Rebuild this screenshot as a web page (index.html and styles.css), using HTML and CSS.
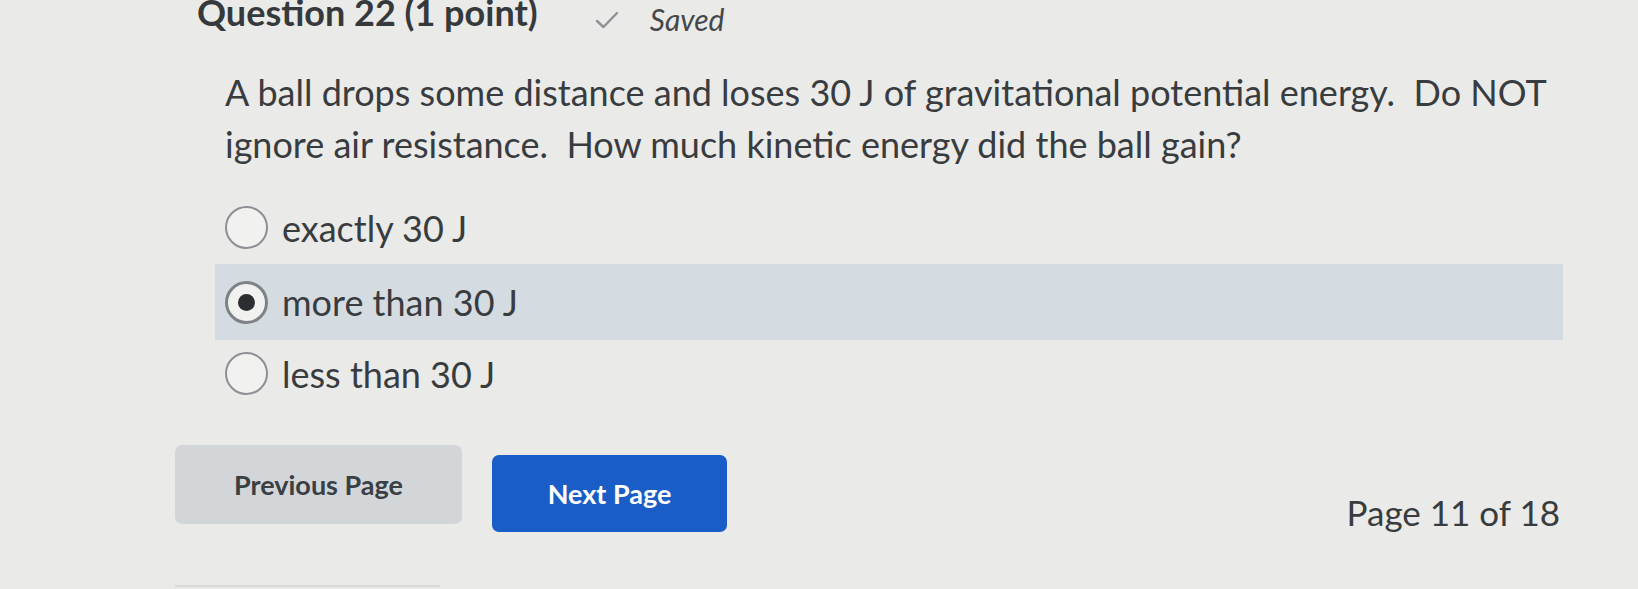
FILE: index.html
```html
<!DOCTYPE html>
<html lang="en">
<head>
<meta charset="utf-8">
<title>Question 22</title>
<link rel="stylesheet" href="styles.css">
</head>
<body>
<div class="page">
  <header class="q-head">
    <h2 class="q-title">Question 22 (1 point)</h2>
    <span class="saved">
      <svg class="check" viewBox="0 0 26 20" width="26" height="20"><path d="M3 11 L9.5 17 L23 3" fill="none" stroke="#8e9195" stroke-width="2.4" stroke-linecap="round" stroke-linejoin="round"/></svg>
      <em>Saved</em>
    </span>
  </header>
  <p class="q-text">A ball drops some distance and loses 30 J of gravitational potential energy.&nbsp; Do NOT ignore air resistance.&nbsp; How much kinetic energy did the ball gain?</p>
  <div class="options">
    <label class="opt"><span class="radio"></span><span class="opt-text">exactly 30 J</span></label>
    <label class="opt selected"><span class="radio on"></span><span class="opt-text">more than 30 J</span></label>
    <label class="opt"><span class="radio"></span><span class="opt-text">less than 30 J</span></label>
  </div>
  <div class="nav">
    <button class="btn prev">Previous Page</button>
    <button class="btn next">Next Page</button>
    <span class="pager">Page 11 of 18</span>
  </div>
  <div class="rule"></div>
</div>
</body>
</html>
```

FILE: styles.css
```css
html, body {
  margin: 0;
  padding: 0;
}
body {
  background: #eaeae8;
  font-family: Lato, "Open Sans", sans-serif;
  color: #393c3f;
  width: 1638px;
  height: 589px;
  overflow: hidden;
}
.page {
  padding: 0 75px 0 175px;
}
.q-head {
  display: flex;
  align-items: flex-start;
  margin-top: -8px;
  padding-left: 22px;
  height: 40px;
}
.q-title {
  margin: 0;
  font-size: 36px;
  line-height: 40px;
  font-weight: 700;
  color: #36393c;
}
.saved {
  display: flex;
  align-items: center;
  margin-left: 56px;
  color: #45484b;
  font-size: 30px;
  line-height: 40px;
  padding-top: 7px;
}
.check {
  margin-right: 30px;
  margin-top: 2px;
}
.saved em {
  font-style: italic;
}
.q-text {
  margin: 34px 0 0 50px;
  font-size: 36px;
  line-height: 52px;
  width: 1340px;
}
.options {
  margin: 21px 0 0 40px;
  display: flex;
  flex-direction: column;
}
.opt {
  display: flex;
  align-items: center;
  height: 73px;
  padding-left: 10px;
  font-size: 36px;
}
.opt.selected {
  background: #d5dce1;
  height: 76px;
  margin-bottom: -3px;
}
.radio {
  flex: none;
  width: 43px;
  height: 43px;
  border: 2px solid #8c8f93;
  border-radius: 50%;
  background: #f1f1f0;
  box-sizing: border-box;
  display: flex;
  align-items: center;
  justify-content: center;
  margin-right: 14px;
}
.radio.on {
  border-width: 3px;
  border-color: #7e8286;
}
.radio.on::after {
  content: "";
  width: 17px;
  height: 17px;
  border-radius: 50%;
  background: #2b2e31;
}
.nav {
  display: flex;
  align-items: flex-start;
  gap: 30px;
  margin-top: 35px;
}
.btn {
  border: none;
  border-radius: 7px;
  font-family: Lato, "Open Sans", sans-serif;
  font-weight: 700;
  font-size: 27px;
  padding: 0;
}
.prev {
  width: 287px;
  height: 79px;
  background: #d3d6d9;
  color: #3a3f43;
}
.next {
  width: 235px;
  height: 77px;
  background: #1b5dc6;
  color: #ffffff;
  margin-top: 10px;
}
.pager {
  margin-left: auto;
  margin-right: 3px;
  font-size: 35px;
  line-height: 42px;
  margin-top: 46px;
  color: #393c3f;
}
.rule {
  margin-top: 52px;
  width: 265px;
  height: 2px;
  background: #d8d8d6;
}
```
